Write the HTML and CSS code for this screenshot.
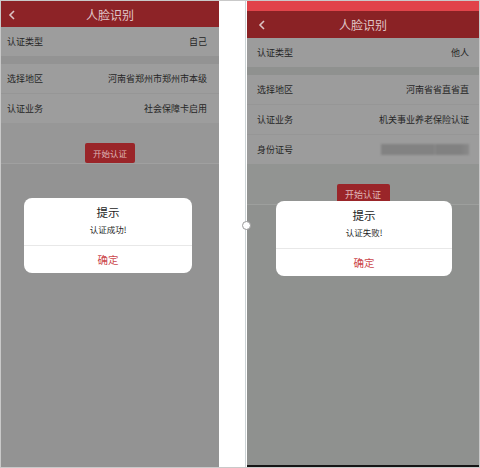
FILE: index.html
```html
<!DOCTYPE html>
<html lang="zh-CN">
<head>
<meta charset="utf-8">
<title>人脸识别</title>
<link rel="stylesheet" href="styles.css">
</head>
<body>
<div class="frame">
  <section class="screen screen-left">
    <header class="nav">
      <svg class="back" width="8" height="10" viewBox="0 0 8 10"><polyline points="6,1 2,5 6,9" fill="none" stroke="#dcc4c5" stroke-width="1.6"/></svg>
      <h1 class="title">人脸识别</h1>
    </header>
    <div class="group">
      <div class="row"><span class="label">认证类型</span><span class="value">自己</span></div>
    </div>
    <div class="group">
      <div class="row"><span class="label">选择地区</span><span class="value">河南省郑州市郑州市本级</span></div>
      <div class="row"><span class="label">认证业务</span><span class="value">社会保障卡启用</span></div>
    </div>
    <div class="actions"><span class="btn">开始认证</span></div>
    <div class="dialog dialog-left">
      <div class="dialog-body">
        <div class="dialog-title">提示</div>
        <div class="dialog-msg">认证成功!</div>
      </div>
      <div class="dialog-btn">确定</div>
    </div>
  </section>

  <div class="gutter"></div>

  <section class="phone-right">
    <div class="screen screen-right">
      <div class="status"></div>
      <header class="nav">
        <svg class="back" width="8" height="10" viewBox="0 0 8 10"><polyline points="6,1 2,5 6,9" fill="none" stroke="#dcc4c5" stroke-width="1.6"/></svg>
        <h1 class="title">人脸识别</h1>
      </header>
      <div class="group">
        <div class="row"><span class="label">认证类型</span><span class="value">他人</span></div>
      </div>
      <div class="group">
        <div class="row"><span class="label">选择地区</span><span class="value">河南省省直省直</span></div>
        <div class="row"><span class="label">认证业务</span><span class="value">机关事业养老保险认证</span></div>
        <div class="row"><span class="label">身份证号</span><span class="masked"></span></div>
      </div>
      <div class="actions"><span class="btn">开始认证</span></div>
      <div class="dialog dialog-right">
        <div class="dialog-body">
          <div class="dialog-title">提示</div>
          <div class="dialog-msg">认证失败!</div>
        </div>
        <div class="dialog-btn">确定</div>
      </div>
    </div>
  </section>

  <span class="handle"></span>
</div>
</body>
</html>
```

FILE: styles.css
```css
* { box-sizing: border-box; margin: 0; padding: 0; }

body {
  width: 480px;
  height: 468px;
  background: #fff;
  font-family: "Noto Sans CJK SC", "Noto Sans", sans-serif;
}

.frame {
  position: relative;
  width: 480px;
  height: 468px;
  border: 1px solid #c9c9c9;
  display: flex;
  background: #fff;
}

/* phone screens, dimmed by the alert mask */
.screen {
  position: relative;
  display: flex;
  flex-direction: column;
  background: #939393;
  color: #262626;
  overflow: hidden;
}

.screen-left { width: 218px; height: 100%; }

.gutter { width: 26px; }

.phone-right {
  flex: 1;
  border-left: 1px solid #cdd4d6;
  padding-left: 1px;
  background: #fff;
}

.screen-right {
  height: 100%;
  background: #8f918f;
  border-bottom: 2px solid #151515;
}

.status { height: 10px; background: #e1434a; flex: none; }

.nav {
  position: relative;
  flex: none;
  height: 26px;
  background: #8d2327;
  display: flex;
  align-items: center;
  justify-content: center;
}
.screen-right .nav { height: 27px; background: #8a2225; }

.back { position: absolute; left: 7px; top: 9px; }
.screen-right .back { left: 11px; }

.title {
  font-size: 12px;
  font-weight: 400;
  color: #e0c6c7;
}

.group {
  flex: none;
  background: #9c9c9c;
}
.group + .group { margin-top: 8px; }
.screen-left .group { background: #9d9d9d; }

.row {
  height: 30px;
  display: flex;
  align-items: center;
  justify-content: space-between;
  padding: 0 12px 0 6px;
  font-size: 9px;
  border-bottom: 1px solid #969696;
}
.row:last-child { border-bottom: none; height: 29px; }
.screen-right .row { padding: 0 10px 0 10px; }

.masked {
  width: 88px;
  height: 11px;
  background: linear-gradient(90deg, #828282 0 60%, #878787 60% 62%, #818181 62% 90%, #898989 100%);
  filter: blur(0.8px);
}

.actions {
  flex: none;
  height: 41px;
  padding-top: 20px;
  display: flex;
  justify-content: center;
  align-items: flex-start;
  border-bottom: 1px solid #a0a0a0;
  background: #979797;
}
.screen-right .actions { background: #929492; border-bottom-color: #9d9f9d; }

.btn {
  width: 50px;
  height: 20px;
  border-radius: 2px;
  background: #9a2529;
  color: #dfb6b7;
  font-size: 8.5px;
  display: flex;
  align-items: center;
  justify-content: center;
}
.screen-right .btn { width: 53px; font-size: 9px; }

/* alert box floating over the mask */
.dialog {
  position: absolute;
  width: 168px;
  height: 75px;
  background: #fff;
  border-radius: 8px;
  display: flex;
  flex-direction: column;
  overflow: hidden;
}
.dialog-left { left: 23px; top: 197px; }
.dialog-right { left: 29px; top: 200px; width: 176px; }

.dialog-body {
  height: 48px;
  padding-top: 7px;
  border-bottom: 1px solid #e8e8e8;
  text-align: center;
}
.dialog-title { font-size: 11.5px; line-height: 15px; color: #1c1c1c; }
.dialog-msg { font-size: 8.5px; line-height: 12px; margin-top: 3px; color: #1e1e1e; }

.dialog-btn {
  flex: 1;
  display: flex;
  align-items: center;
  justify-content: center;
  font-size: 10.5px;
  color: #cc474c;
}

.handle {
  position: absolute;
  left: 241px;
  top: 220px;
  width: 9px;
  height: 9px;
  border-radius: 50%;
  background: #fff;
  border: 1px solid #9a9a9a;
}
```
